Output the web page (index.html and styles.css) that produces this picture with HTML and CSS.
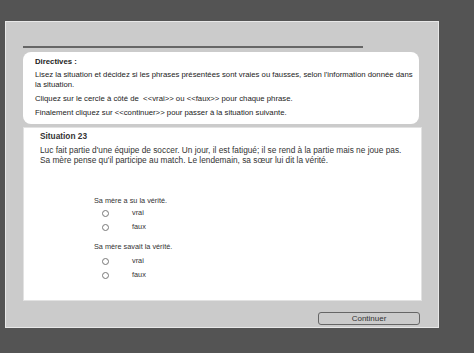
FILE: index.html
```html
<!DOCTYPE html>
<html lang="fr">
<head>
    <meta charset="UTF-8">
    <meta name="viewport" content="width=device-width, initial-scale=1.0">
    <title>Situation 23</title>
    <link rel="stylesheet" href="styles.css">
</head>
<body>
    <div class="frame">
        <div class="rule"></div>

        <div class="directives">
            <p class="title">Directives :</p>
            <p class="line">Lisez la situation et décidez si les phrases présentées sont vraies ou fausses, selon l'information donnée dans<br>la situation.</p>
            <p class="line">Cliquez sur le cercle à côté de &nbsp;&lt;&lt;vrai&gt;&gt; ou &lt;&lt;faux&gt;&gt; pour chaque phrase.</p>
            <p class="line">Finalement cliquez sur &lt;&lt;continuer&gt;&gt; pour passer à la situation suivante.</p>
        </div>

        <div class="situation">
            <p class="title">Situation 23</p>
            <p class="story">Luc fait partie d'une équipe de soccer. Un jour, il est fatigué; il se rend à la partie mais ne joue pas.<br>Sa mère pense qu'il participe au match. Le lendemain, sa sœur lui dit la vérité.</p>

            <div class="question first">
                <p class="prompt">Sa mère a su la vérité.</p>
                <label class="option"><span class="radio"></span>vrai</label>
                <label class="option"><span class="radio"></span>faux</label>
            </div>

            <div class="question second">
                <p class="prompt">Sa mère savait la vérité.</p>
                <label class="option"><span class="radio"></span>vrai</label>
                <label class="option"><span class="radio"></span>faux</label>
            </div>
        </div>

        <div class="actions">
            <button class="btn">Continuer</button>
        </div>
    </div>
</body>
</html>
```

FILE: styles.css
```css
body {
    margin: 0;
    background: #545454;
    font-family: 'Liberation Sans', Arial, sans-serif;
    font-size: 7.5px;
    color: #222;
}
p {
    margin: 0;
}
.frame {
    box-sizing: border-box;
    width: 434px;
    height: 307px;
    margin: 21px 0 0 5px;
    padding: 24px 16px 0 17px;
    background: #cbcbcb;
    border: 1px solid #e8e8e8;
}
.rule {
    width: 340px;
    height: 2px;
    background: #666;
}
.directives {
    box-sizing: border-box;
    width: 396px;
    height: 72px;
    margin-top: 4px;
    padding: 5px 2px 0 12px;
    background: #fff;
    border-radius: 8px;
    font-size: 7.75px;
    line-height: 10px;
    white-space: nowrap;
}
.title {
    font-weight: bold;
}
.directives .line {
    margin-top: 3px;
}
.directives .line + .line {
    margin-top: 4px;
}
.situation {
    box-sizing: border-box;
    height: 174px;
    margin-top: 3px;
    padding: 3px 6px 0 16px;
    background: #fff;
    border: 1px solid #e2e2e2;
    font-size: 8.3px;
    line-height: 10px;
    color: #333;
}
.story {
    margin-top: 4px;
    white-space: nowrap;
}
.question {
    margin-left: 54px;
    font-size: 7.3px;
}
.question.first {
    margin-top: 31px;
}
.question.second {
    margin-top: 8px;
}
.question.second .prompt {
    margin-bottom: 2px;
}
.option {
    display: flex;
    align-items: center;
    height: 14px;
    padding-left: 8px;
}
.radio {
    box-sizing: border-box;
    width: 7px;
    height: 7px;
    margin-right: 23px;
    border: 1px solid #777;
    border-radius: 50%;
}
.actions {
    display: flex;
    justify-content: flex-end;
    padding-right: 2px;
    margin-top: 11px;
}
.btn {
    width: 102px;
    height: 13px;
    padding: 0;
    font-family: 'Liberation Sans', Arial, sans-serif;
    font-size: 8px;
    line-height: 11px;
    color: #333;
    background: #cbcbcb;
    border: 1px solid #666;
    border-radius: 3px;
}
```
